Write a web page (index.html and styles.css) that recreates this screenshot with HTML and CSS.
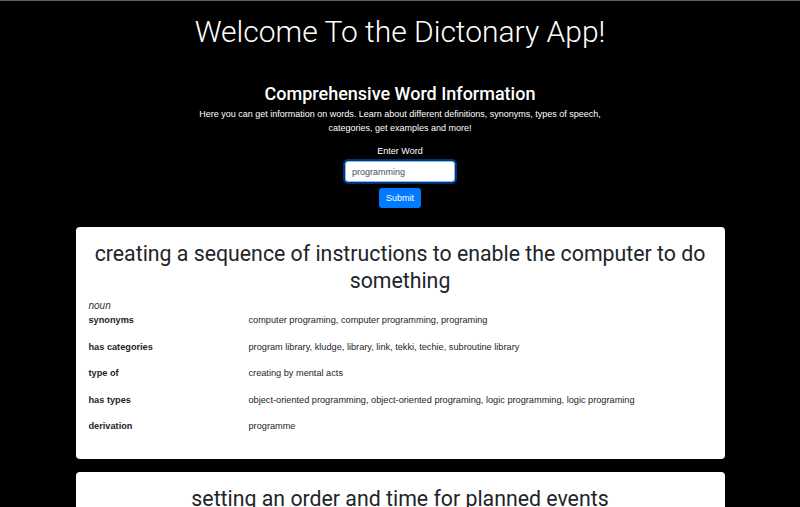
FILE: index.html
```html
<!DOCTYPE html>
<html lang="en">
<head>
<meta charset="utf-8">
<title>Dictonary App</title>
<link rel="stylesheet" href="styles.css">
</head>
<body>
<header class="hero">
  <h1 class="hero-title">Welcome To the Dictonary App!</h1>
</header>
<section class="intro">
  <h2 class="intro-title">Comprehensive Word Information</h2>
  <p class="intro-text">Here you can get information on words. Learn about different definitions, synonyms, types of speech,<br>categories, get examples and more!</p>
  <form class="search">
    <label class="search-label" for="word">Enter Word</label>
    <input class="search-input" id="word" type="text" value="programming">
    <button class="search-btn" type="button">Submit</button>
  </form>
</section>
<main class="results">
  <article class="card">
    <h3 class="card-title">creating a sequence of instructions to enable the computer to do something</h3>
    <div class="pos">noun</div>
    <dl class="facts">
      <dt>synonyms</dt><dd>computer programing, computer programming, programing</dd>
      <dt>has categories</dt><dd>program library, kludge, library, link, tekki, techie, subroutine library</dd>
      <dt>type of</dt><dd>creating by mental acts</dd>
      <dt>has types</dt><dd>object-oriented programming, object-oriented programing, logic programming, logic programing</dd>
      <dt>derivation</dt><dd>programme</dd>
    </dl>
  </article>
  <article class="card">
    <h3 class="card-title">setting an order and time for planned events</h3>
    <div class="pos">noun</div>
    <dl class="facts">
      <dt>synonyms</dt><dd>scheduling</dd>
    </dl>
  </article>
</main>
</body>
</html>
```
FILE: styles.css
```css
html, body {
  margin: 0;
  padding: 0;
}
body {
  background: #000;
  color: #fff;
  font-family: "Liberation Sans", Arial, sans-serif;
  border-top: 1px solid #5f5f5f;
  height: 506px;
  overflow: hidden;
}
.hero {
  padding-top: 12px;
  text-align: center;
}
.hero-title {
  margin: 0;
  font-family: Roboto, "Liberation Sans", sans-serif;
  font-weight: 300;
  font-size: 30px;
  line-height: 38px;
}
.intro {
  margin-top: 31px;
  text-align: center;
}
.intro-title {
  margin: 0;
  font-family: Roboto, "Liberation Sans", sans-serif;
  font-weight: 500;
  font-size: 18px;
  line-height: 24px;
}
.intro-text {
  margin: 1px 0 0;
  font-size: 9px;
  line-height: 14px;
}
.search {
  display: flex;
  flex-direction: column;
  align-items: center;
  margin-top: 10px;
}
.search-label {
  font-size: 9px;
  line-height: 12px;
}
.search-input {
  box-sizing: border-box;
  margin-top: 4px;
  width: 110px;
  height: 21px;
  padding: 0 6px;
  border: 1px solid #80bdff;
  border-radius: 3px;
  box-shadow: 0 0 0 2px rgba(0, 123, 255, 0.45);
  background: #fff;
  color: #495057;
  font-family: "Liberation Sans", Arial, sans-serif;
  font-size: 9px;
  outline: none;
}
.search-btn {
  box-sizing: border-box;
  margin-top: 6px;
  width: 42px;
  height: 20px;
  padding: 0;
  border: 0;
  border-radius: 3px;
  background: #007bff;
  color: #fff;
  font-family: "Liberation Sans", Arial, sans-serif;
  font-size: 9px;
}
.results {
  display: flex;
  flex-direction: column;
  gap: 13px;
  margin-top: 19px;
}
.card {
  box-sizing: border-box;
  width: 649px;
  margin: 0 auto;
  padding: 13px 13px 26px;
  background: #fff;
  border-radius: 4px;
  color: #212529;
}
.card-title {
  margin: 0;
  text-align: center;
  font-family: Roboto, "Liberation Sans", sans-serif;
  font-weight: 400;
  font-size: 21.3px;
  line-height: 27px;
}
.pos {
  margin-top: 6px;
  margin-bottom: 3px;
  font-style: italic;
  font-size: 10px;
  line-height: 12px;
  color: #333;
}
.facts {
  display: grid;
  grid-template-columns: 160px 1fr;
  row-gap: 15px;
  margin: 0;
  font-size: 9.2px;
  line-height: 11.5px;
}
.facts dt {
  font-weight: 700;
}
.facts dd {
  margin: 0;
}
```
